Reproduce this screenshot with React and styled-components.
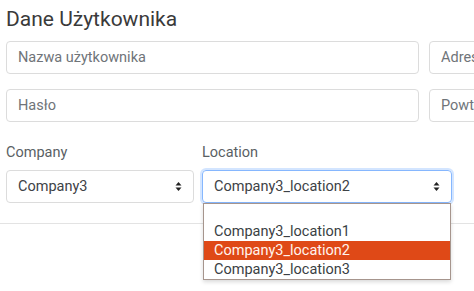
import React from "react";
import styled, { createGlobalStyle } from "styled-components";

const Global = createGlobalStyle`
  html, body { margin: 0; padding: 0; background: #fff; overflow: hidden; }
  body { font-family: Roboto, "Liberation Sans", sans-serif; width: 474px; height: 291px; }
  * { box-sizing: border-box; }
`;

const Page = styled.div`
  position: relative;
  width: 474px;
  height: 291px;
  overflow: hidden;
`;

const Container = styled.div`
  padding: 7px 0 0 6px;
  width: 900px;
`;

const Title = styled.h4`
  margin: 0 0 9px;
  font-size: 21px;
  line-height: 25px;
  font-weight: 400;
  color: #3a3a3a;
`;

const Row = styled.div`
  display: flex;
  gap: ${p => p.$gap || 10}px;
  margin-bottom: ${p => p.$mb || 0}px;
`;

const Field = styled.div`
  display: flex;
  flex-direction: column;
  width: ${p => p.$w}px;
  position: relative;
`;

const Input = styled.input`
  width: ${p => p.$w}px;
  height: 33px;
  border: 1px solid #dcdcdc;
  border-radius: 4px;
  padding: 0 11px;
  font-family: inherit;
  font-size: 14.5px;
  color: #495057;
  outline: none;
  &::placeholder { color: #6f7479; }
`;

const Label = styled.label`
  font-size: 14.5px;
  line-height: 22px;
  color: #5a5f64;
  margin-bottom: 6px;
`;

const SelectBox = styled.div`
  height: 33px;
  border: 1px solid ${p => (p.$focus ? "#86b7fe" : "#dcdcdc")};
  border-radius: 4px;
  padding: 0 11px;
  display: flex;
  align-items: center;
  justify-content: space-between;
  font-size: 14.5px;
  color: #3d4246;
  box-shadow: ${p => (p.$focus ? "0 0 0 2px rgba(13,110,253,0.18)" : "none")};
`;

const Arrows = () => (
  <svg width="7" height="11" viewBox="0 0 7 11">
    <path d="M0.5 4.5 L3.5 1 L6.5 4.5 Z" fill="#222" />
    <path d="M0.5 6.5 L3.5 10 L6.5 6.5 Z" fill="#222" />
  </svg>
);

const Divider = styled.div`
  height: 1px;
  background: #e3e3e3;
  margin-top: 20px;
`;

const Dropdown = styled.ul`
  position: absolute;
  left: 1px;
  top: 61px;
  width: 248px;
  margin: 0;
  padding: 0;
  list-style: none;
  background: #fff;
  border: 1px solid #a6958d;
  box-shadow: 0 2px 4px rgba(0,0,0,0.15);
  z-index: 2;
`;

const Option = styled.li`
  height: ${p => (p.$empty ? 18 : 19)}px;
  line-height: 19px;
  padding-left: 10px;
  font-size: 14.5px;
  color: ${p => (p.$active ? "#fff4ee" : "#3a3f44")};
  background: ${p => (p.$active ? "#df4917" : "transparent")};
`;

export default function App() {
  return (
    <Page>
      <Global />
      <Container>
        <Title>Dane Użytkownika</Title>
        <Row $mb={15}>
          <Input $w={413} placeholder="Nazwa użytkownika" />
          <Input $w={413} placeholder="Adres e-mail" />
        </Row>
        <Row $mb={20}>
          <Input $w={413} placeholder="Hasło" type="password" />
          <Input $w={413} placeholder="Powtórz hasło" type="password" />
        </Row>
        <Row $gap={8}>
          <Field $w={188}>
            <Label>Company</Label>
            <SelectBox>
              <span>Company3</span>
              <Arrows />
            </SelectBox>
          </Field>
          <Field $w={250}>
            <Label>Location</Label>
            <SelectBox $focus>
              <span>Company3_location2</span>
              <Arrows />
            </SelectBox>
            <Dropdown>
              <Option $empty>&nbsp;</Option>
              <Option>Company3_location1</Option>
              <Option $active>Company3_location2</Option>
              <Option>Company3_location3</Option>
            </Dropdown>
          </Field>
        </Row>
      </Container>
      <Divider />
    </Page>
  );
}
